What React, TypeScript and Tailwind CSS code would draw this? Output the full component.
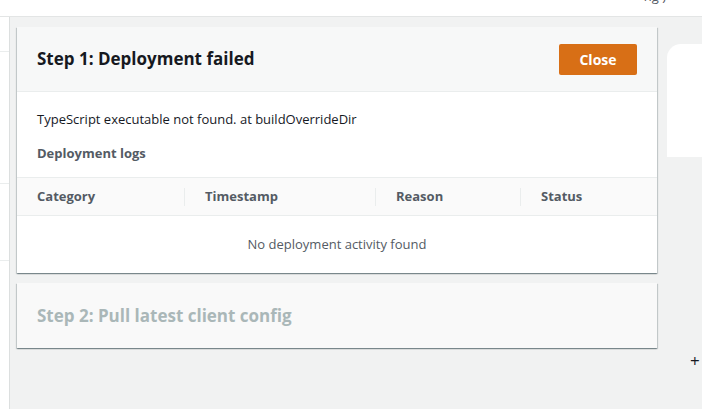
import React from 'react'

const columns = [
  { label: 'Category', width: 'w-[167px]' },
  { label: 'Timestamp', width: 'w-[191px]' },
  { label: 'Reason', width: 'w-[145px]' },
  { label: 'Status', width: 'flex-1' }
]

export default function App() {
  return (
    <div
      className="flex h-[409px] w-full flex-col overflow-hidden bg-[#f1f2f2] text-[#16191f]"
      style={{ fontFamily: '"Open Sans", "Noto Sans", Arial, sans-serif' }}
    >
      {/* top bar, mostly scrolled out of view */}
      <div className="flex h-[17px] shrink-0 justify-end overflow-hidden border-b border-[#e3e5e5] bg-white pr-[36px]">
        <span className="-mt-[13px] text-[13px] text-[#545b64]">ng )</span>
      </div>

      <div className="flex flex-1">
        {/* side nav edge */}
        <div className="flex w-[10px] shrink-0 flex-col border-r border-[#dcdfdf] bg-white">
          <div className="h-[35px] border-b border-[#eaeded]" />
          <div className="h-[132px] border-b border-[#eaeded]" />
          <div className="h-[77px] border-b border-[#eaeded]" />
        </div>

        <div className="flex flex-1 pl-[7px] pt-[10px]">
          <div className="flex w-[640px] shrink-0 flex-col gap-[10px]">
            {/* step 1 */}
            <div className="bg-white shadow-[0_1px_1px_0_rgba(0,28,36,0.3),1px_1px_1px_0_rgba(0,28,36,0.15),-1px_1px_1px_0_rgba(0,28,36,0.15)]">
              <div className="flex h-[65px] items-center justify-between border-b border-[#eaeded] bg-[#f7f8f8] px-[20px]">
                <h2 className="text-[17px] font-bold leading-[22px]">Step 1: Deployment failed</h2>
                <button className="h-[31px] w-[78px] rounded-[2px] bg-[#d86f16] text-[14px] font-bold text-white">
                  Close
                </button>
              </div>
              <div className="px-[20px] pb-[14px] pt-[17px] text-[13px] leading-[20px]">
                <p>TypeScript executable not found. at buildOverrideDir</p>
                <p className="mt-[14px] font-bold text-[#545b64]">Deployment logs</p>
              </div>
              <div className="flex h-[39px] items-center border-y border-[#eaeded] bg-[#fafafa] text-[13px] font-bold text-[#545b64]">
                {columns.map((col, i) => (
                  <div key={col.label} className={`${col.width} flex items-center`}>
                    {i > 0 && <div className="h-[18px] w-px bg-[#eaeded]" />}
                    <span className="pl-[20px]">{col.label}</span>
                  </div>
                ))}
              </div>
              <div className="flex h-[57px] items-center justify-center text-[13px] text-[#545b64]">
                No deployment activity found
              </div>
            </div>

            {/* step 2 */}
            <div className="flex h-[65px] items-center bg-[#f9f9f9] px-[20px] shadow-[0_1px_1px_0_rgba(0,28,36,0.3),1px_1px_1px_0_rgba(0,28,36,0.15),-1px_1px_1px_0_rgba(0,28,36,0.15)]">
              <h2 className="text-[17px] font-bold leading-[22px] text-[#aab7b8]">Step 2: Pull latest client config</h2>
            </div>
          </div>

          {/* right rail */}
          <div className="ml-[10px] flex flex-1 flex-col">
            <div className="mt-[17px] h-[113px] rounded-tl-[14px] bg-white" />
            <span className="ml-[23px] mt-[195px] text-[17px] leading-[17px] text-[#16191f]">+</span>
          </div>
        </div>
      </div>
    </div>
  )
}
